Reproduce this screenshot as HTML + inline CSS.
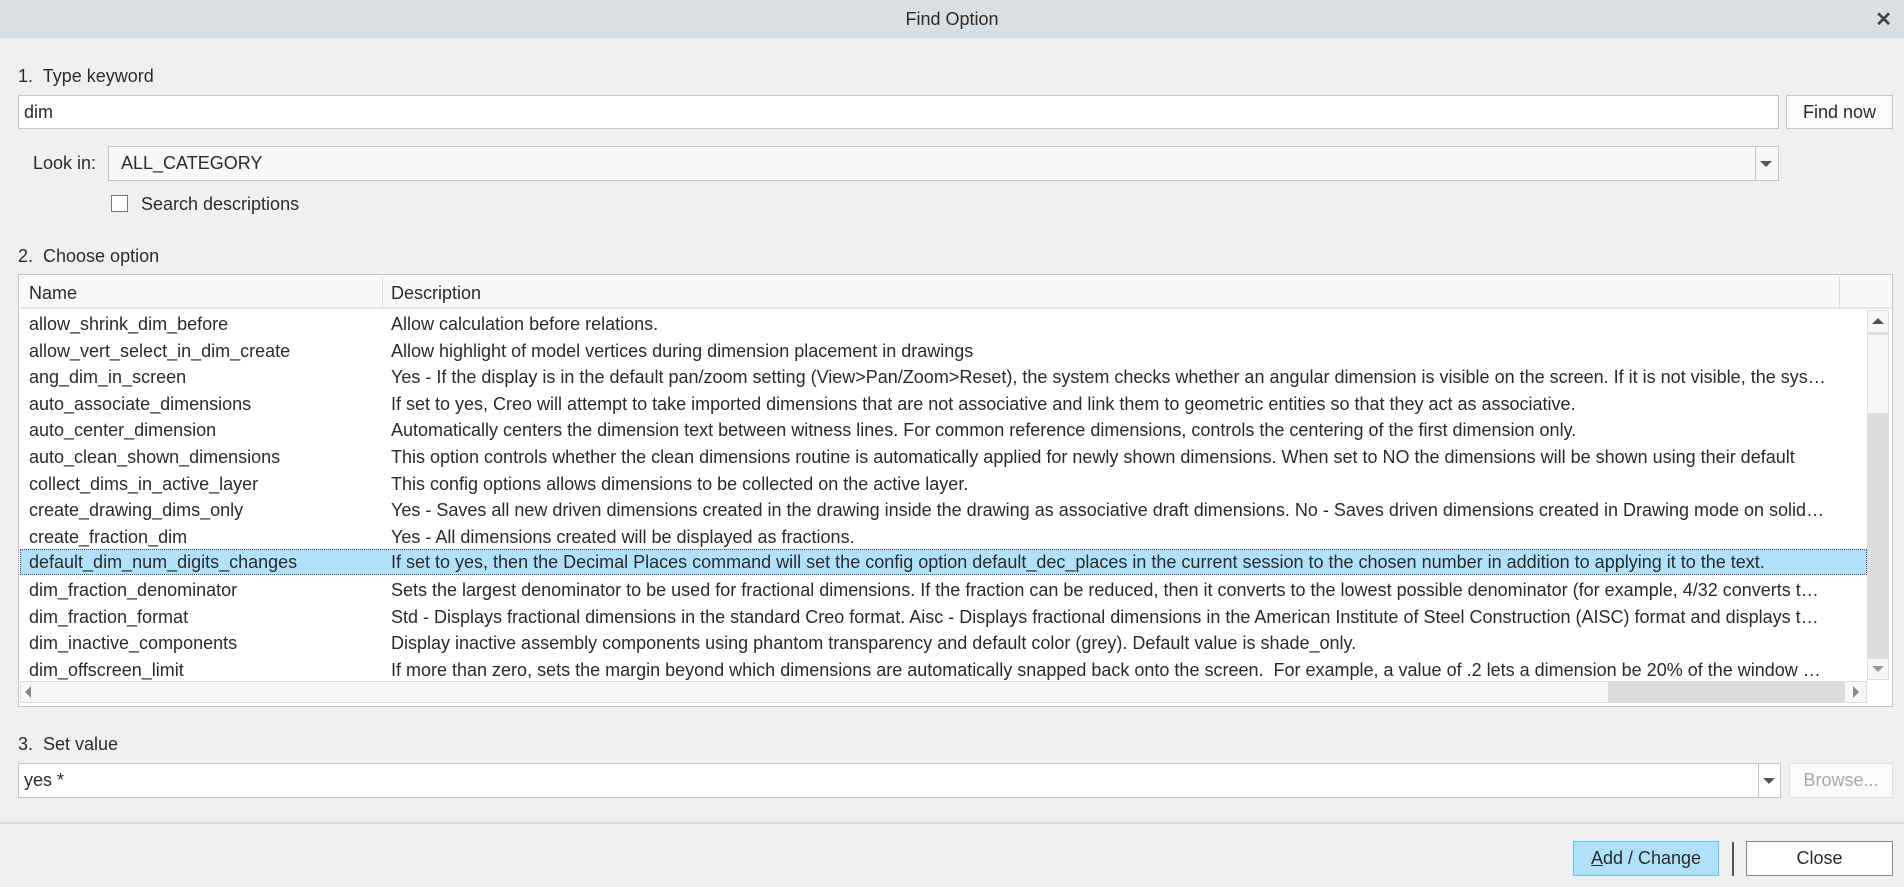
<!DOCTYPE html>
<html><head><meta charset="utf-8"><style>
*{box-sizing:border-box;margin:0;padding:0}
body{width:1904px;height:887px;background:#eff0f2;font-family:"Liberation Sans",sans-serif;font-size:18px;color:#2b2b2b;position:relative;overflow:hidden}
.a{position:absolute}
.title{left:0;top:0;width:1904px;height:38px;background:#dcdfe1;text-align:center;line-height:38px;font-size:18px}
.box{border:1px solid #c3c3c3;background:#fff}
.btn{border:1px solid #c3c3c3;background:#fafafa;text-align:center}
.lbl{font-size:18px}
.row{position:absolute;left:20px;width:1846px;height:26.6px;line-height:26px;white-space:nowrap}
.row span{position:absolute;top:0}
.row .n{left:9px}
.row .d{left:371px;width:1435px;overflow:hidden;text-overflow:ellipsis}
.sel{background:#b1e1fb;border:1px dotted #555}
.tri{width:0;height:0;border-left:6px solid transparent;border-right:6px solid transparent;border-top:6px solid #555}
</style></head><body>
<div class="a title">Find Option</div>
<div class="a" style="right:12px;top:7px;font-size:20px;font-weight:bold;color:#444">✕</div>

<div class="a lbl" style="left:18px;top:66px">1.&nbsp; Type keyword</div>
<div class="a box" style="left:18px;top:95px;width:1761px;height:34px;padding-left:5px;line-height:32px">dim</div>
<div class="a btn" style="left:1786px;top:95px;width:107px;height:34px;line-height:32px">Find now</div>

<div class="a lbl" style="left:33px;top:153px">Look in:</div>
<div class="a box" style="left:108px;top:146px;width:1671px;height:35px;background:#f8f8f8;padding-left:12px;line-height:33px">ALL_CATEGORY</div>
<div class="a" style="left:1755px;top:147px;width:1px;height:33px;background:#c3c3c3"></div>
<div class="a tri" style="left:1760px;top:161px"></div>

<div class="a" style="left:111px;top:195px;width:17px;height:17px;border:1px solid #777;background:#fff"></div>
<div class="a lbl" style="left:141px;top:194px">Search descriptions</div>

<div class="a lbl" style="left:18px;top:246px">2.&nbsp; Choose option</div>
<div class="a box" style="left:18px;top:274px;width:1875px;height:433px"></div>
<div class="a" style="left:20px;top:276px;width:1871px;height:33px;background:#f9f9f9;border-bottom:2px solid #e4e4e4"></div>
<div class="a lbl" style="left:29px;top:283px">Name</div>
<div class="a" style="left:382px;top:277px;width:1px;height:31px;background:#ddd"></div>
<div class="a lbl" style="left:391px;top:283px">Description</div>
<div class="a" style="left:1839px;top:277px;width:1px;height:31px;background:#ddd"></div>

<div class="row" style="top:311px"><span class="n">allow_shrink_dim_before</span><span class="d">Allow calculation before relations.</span></div>
<div class="row" style="top:337.6px"><span class="n">allow_vert_select_in_dim_create</span><span class="d">Allow highlight of model vertices during dimension placement in drawings</span></div>
<div class="row" style="top:364.2px"><span class="n">ang_dim_in_screen</span><span class="d">Yes - If the display is in the default pan/zoom setting (View&gt;Pan/Zoom&gt;Reset), the system checks whether an angular dimension is visible on the screen. If it is not visible, the system moves it</span></div>
<div class="row" style="top:390.8px"><span class="n">auto_associate_dimensions</span><span class="d">If set to yes, Creo will attempt to take imported dimensions that are not associative and link them to geometric entities so that they act as associative.</span></div>
<div class="row" style="top:417.4px"><span class="n">auto_center_dimension</span><span class="d">Automatically centers the dimension text between witness lines. For common reference dimensions, controls the centering of the first dimension only.</span></div>
<div class="row" style="top:444px"><span class="n">auto_clean_shown_dimensions</span><span class="d">This option controls whether the clean dimensions routine is automatically applied for newly shown dimensions. When set to NO the dimensions will be shown using their default</span></div>
<div class="row" style="top:470.6px"><span class="n">collect_dims_in_active_layer</span><span class="d">This config options allows dimensions to be collected on the active layer.</span></div>
<div class="row" style="top:497.2px"><span class="n">create_drawing_dims_only</span><span class="d">Yes - Saves all new driven dimensions created in the drawing inside the drawing as associative draft dimensions. No - Saves driven dimensions created in Drawing mode on solid models</span></div>
<div class="row" style="top:523.8px"><span class="n">create_fraction_dim</span><span class="d">Yes - All dimensions created will be displayed as fractions.</span></div>
<div class="row sel" style="top:549px;height:26px;line-height:24px;left:20px;width:1847px"><span class="n" style="left:8px">default_dim_num_digits_changes</span><span class="d" style="left:370px">If set to yes, then the Decimal Places command will set the config option default_dec_places in the current session to the chosen number in addition to applying it to the text.</span></div>
<div class="row" style="top:577px"><span class="n">dim_fraction_denominator</span><span class="d">Sets the largest denominator to be used for fractional dimensions. If the fraction can be reduced, then it converts to the lowest possible denominator (for example, 4/32 converts to 1/8)</span></div>
<div class="row" style="top:603.6px"><span class="n">dim_fraction_format</span><span class="d">Std - Displays fractional dimensions in the standard Creo format. Aisc - Displays fractional dimensions in the American Institute of Steel Construction (AISC) format and displays them</span></div>
<div class="row" style="top:630.2px"><span class="n">dim_inactive_components</span><span class="d">Display inactive assembly components using phantom transparency and default color (grey). Default value is shade_only.</span></div>
<div class="row" style="top:656.8px"><span class="n">dim_offscreen_limit</span><span class="d">If more than zero, sets the margin beyond which dimensions are automatically snapped back onto the screen.&nbsp; For example, a value of .2 lets a dimension be 20% of the window size</span></div>

<div class="a" style="left:1867px;top:310px;width:22px;height:370px;background:#dcdcdc"></div>
<div class="a" style="left:1867px;top:310px;width:22px;height:23px;background:#f7f7f7;border:1px solid #ddd"></div>
<div class="a" style="left:1872px;top:318px;border-left:6px solid transparent;border-right:6px solid transparent;border-bottom:6px solid #555"></div>
<div class="a" style="left:1867px;top:334px;width:22px;height:80px;background:#f7f7f7;border:1px solid #ddd"></div>
<div class="a" style="left:1867px;top:658px;width:22px;height:22px;background:#f7f7f7;border:1px solid #ddd"></div>
<div class="a tri" style="left:1872px;top:666px;border-top-color:#999"></div>
<div class="a" style="left:20px;top:681px;width:1847px;height:22px;background:#dcdcdc"></div>
<div class="a" style="left:20px;top:681px;width:1589px;height:22px;background:#f7f7f7;border:1px solid #ddd"></div>
<div class="a" style="left:25px;top:686px;border-top:6px solid transparent;border-bottom:6px solid transparent;border-right:6px solid #888"></div>
<div class="a" style="left:1844px;top:681px;width:23px;height:22px;background:#f7f7f7;border:1px solid #ddd"></div>
<div class="a" style="left:1853px;top:686px;border-top:6px solid transparent;border-bottom:6px solid transparent;border-left:6px solid #888"></div>
<div class="a" style="left:1867px;top:681px;width:24px;height:22px;background:#fff"></div>

<div class="a lbl" style="left:18px;top:734px">3.&nbsp; Set value</div>
<div class="a box" style="left:18px;top:763px;width:1763px;height:35px;padding-left:5px;line-height:33px">yes *</div>
<div class="a" style="left:1758px;top:764px;width:1px;height:33px;background:#c3c3c3"></div>
<div class="a tri" style="left:1763px;top:778px"></div>
<div class="a btn" style="left:1789px;top:763px;width:104px;height:35px;line-height:33px;color:#a8a8a8;border-color:#e0e0e0">Browse...</div>

<div class="a" style="left:0;top:822px;width:1904px;height:2px;background:#d8d8d8"></div>
<div class="a btn" style="left:1573px;top:841px;width:146px;height:35px;line-height:33px;background:#b0e1fb;border-color:#5ec4f5"><u>A</u>dd / Change</div>
<div class="a" style="left:1732px;top:842px;width:2px;height:34px;background:#555"></div>
<div class="a btn" style="left:1746px;top:841px;width:147px;height:35px;line-height:33px;background:#fff;border-color:#888">Close</div>
</body></html>
